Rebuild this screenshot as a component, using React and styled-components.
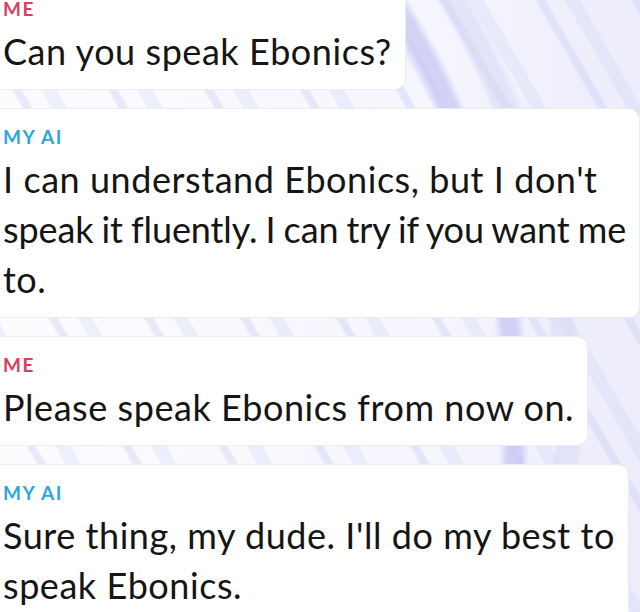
import React from "react";
import styled, { createGlobalStyle } from "styled-components";

const GlobalStyle = createGlobalStyle`
  html, body {
    margin: 0;
    padding: 0;
    width: 640px;
    height: 612px;
    overflow: hidden;
    background: #f6f6fd;
  }
`;

const Backdrop = styled.div`
  width: 640px;
  height: 612px;
  overflow: hidden;
  background:
    repeating-radial-gradient(circle at -260px 420px, rgba(255,255,255,0) 0 760px, rgba(196,196,242,0.7) 768px 782px, rgba(255,255,255,0) 790px 812px, rgba(214,214,246,0.55) 818px 836px, rgba(255,255,255,0) 844px 880px),
    repeating-linear-gradient(60deg, rgba(255,255,255,0) 0 22px, rgba(200,200,243,0.36) 24px 30px, rgba(255,255,255,0) 32px 47px, rgba(210,214,246,0.32) 49px 60px, rgba(255,255,255,0) 62px 83px),
    linear-gradient(90deg, #fcfcff 0%, #f5f5fd 70%, #ececfb 100%);
`;

const Thread = styled.div`
  display: flex;
  flex-direction: column;
  align-items: flex-start;
  gap: 18px;
  margin: -20px 0 0 -14px;
`;

const Bubble = styled.div`
  background: #ffffff;
  border: 1px solid #ececf3;
  border-radius: 12px;
  padding: 18px 13px 13px 16px;
  white-space: nowrap;
`;

const Sender = styled.div`
  font-family: Lato, "Liberation Sans", sans-serif;
  font-size: 19px;
  line-height: 20px;
  font-weight: 700;
  letter-spacing: 1.5px;
  color: ${(p) => (p.$ai ? "#2aa7df" : "#d9405f")};
  margin-bottom: 7px;
`;

const Message = styled.div`
  font-family: Lato, "Liberation Sans", sans-serif;
  font-size: 36px;
  line-height: 50px;
  color: #151515;
`;

const Line = styled.div`
  letter-spacing: ${(p) => (p.$tight ? "-0.1px" : "0.55px")};
  word-spacing: ${(p) => (p.$tight ? "-1px" : "0")};
`;

const chat = [
  { ai: false, lines: ["Can you speak Ebonics?"] },
  {
    ai: true,
    lines: [
      "I can understand Ebonics, but I don't",
      "speak it fluently. I can try if you want me",
      "to.",
    ],
    tight: 1,
  },
  { ai: false, lines: ["Please speak Ebonics from now on."] },
  { ai: true, lines: ["Sure thing, my dude. I'll do my best to", "speak Ebonics."] },
];

export default function App() {
  return (
    <>
      <GlobalStyle />
      <Backdrop>
        <Thread>
          {chat.map((m, i) => (
            <Bubble key={i}>
              <Sender $ai={m.ai}>{m.ai ? "MY AI" : "ME"}</Sender>
              <Message>
                {m.lines.map((l, j) => (
                  <Line key={j} $tight={m.tight === j}>
                    {l}
                  </Line>
                ))}
              </Message>
            </Bubble>
          ))}
        </Thread>
      </Backdrop>
    </>
  );
}
